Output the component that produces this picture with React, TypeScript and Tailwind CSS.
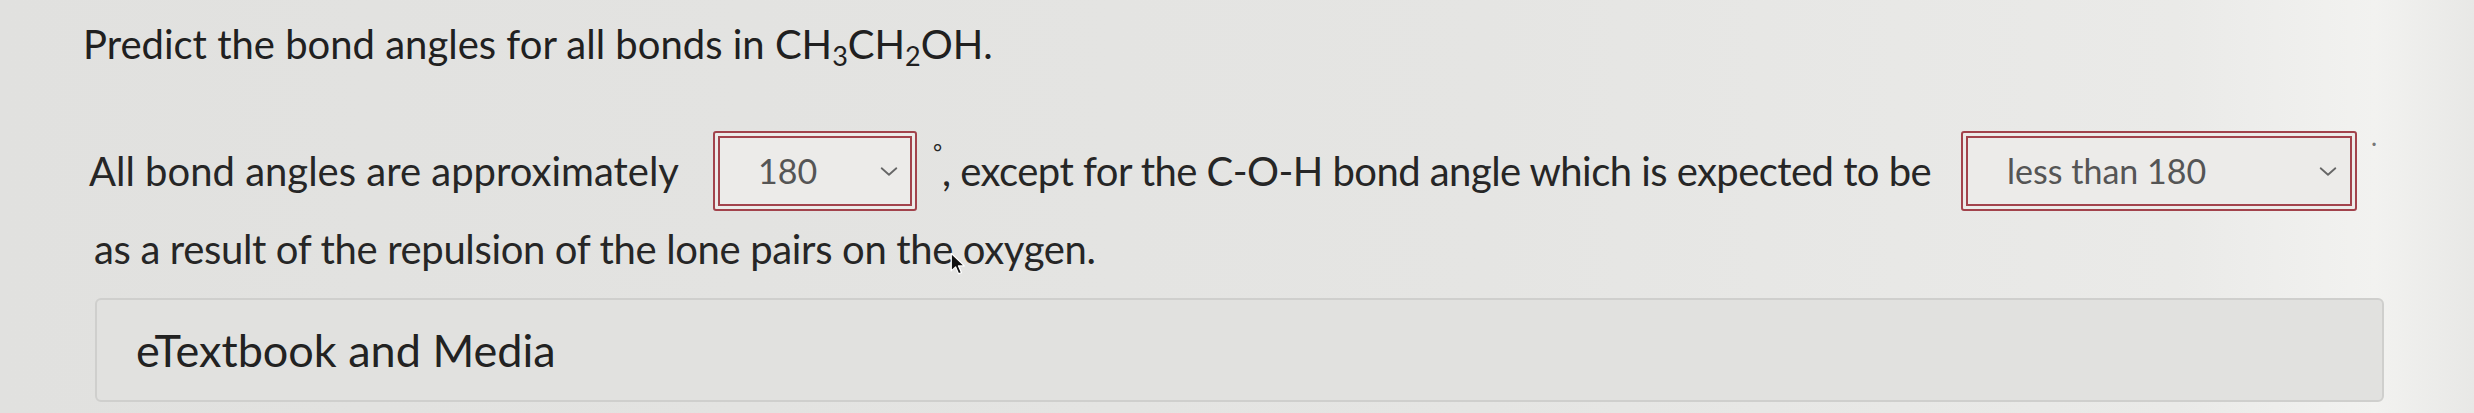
import React from "react";

type SelectProps = {
  value: string;
  className: string;
};

function Chevron() {
  return (
    <svg viewBox="0 0 20 12" className="h-[11px] w-[20px] text-[#666666]" fill="none" stroke="currentColor" strokeWidth={2} strokeLinecap="round" strokeLinejoin="round">
      <path d="M2 2.5l8 7 8-7" />
    </svg>
  );
}

function AnswerSelect({ value, className }: SelectProps) {
  return (
    <div
      className={`inline-flex h-[80px] shrink-0 items-center justify-between rounded-[3px] border-[7px] border-double border-[#a2434c] bg-[#ecebe9] ${className}`}
    >
      <span className="text-[34px] leading-none text-[#555555]">{value}</span>
      <Chevron />
    </div>
  );
}

function Cursor() {
  return (
    <svg viewBox="0 0 12 19" className="absolute left-[950px] top-[252px] h-[24px] w-[15px]">
      <path d="M1 1v14l3.5-3.2 2.4 5.6 2.3-1-2.4-5.4H11.5z" fill="#111" stroke="#fff" strokeWidth={1} strokeLinejoin="round" />
    </svg>
  );
}

export default function App() {
  return (
    <div
      className="relative h-[413px] w-[2474px] overflow-hidden bg-[linear-gradient(90deg,#e1e1df_0%,#e5e5e3_60%,#eaeae8_88%,#f2f2f0_96%,#e8e8e6_100%)] font-['Lato','Noto_Sans',sans-serif] text-[#262626]"
    >
      <p className="pl-[83px] pt-[20px] text-[40px] leading-[1.2] text-[#202020]">
        Predict the bond angles for all bonds in CH
        <sub className="text-[27px]">3</sub>CH<sub className="text-[27px]">2</sub>OH.
      </p>

      <div className="mt-[63px] flex h-[80px] items-center pl-[89px] text-[40px] leading-[1.2]">
        <span>All bond angles are approximately</span>
        <AnswerSelect value="180" className="ml-[34px] w-[204px] pl-[38px] pr-[11px]" />
        <span className="mb-[38px] ml-[16px] text-[22px] leading-none">°</span>
        <span className="tracking-[-0.55px]">, except for the C-O-H bond angle which is expected to be</span>
        <AnswerSelect value="less than 180" className="ml-[30px] w-[396px] pl-[39px] pr-[12px]" />
        <span className="-mt-[8px] ml-[14px] self-start text-[26px] leading-none text-[#777]">.</span>
      </div>

      <p className="mt-[14px] pl-[94px] text-[40px] leading-[1.2] tracking-[-0.35px]">
        as a result of the repulsion of the lone pairs on the oxygen.
      </p>

      <div className="ml-[95px] mr-[90px] mt-[25px] flex h-[104px] items-center rounded-[6px] border-2 border-[#cfcfcd] bg-[#e1e1df] pl-[39px]">
        <span className="text-[45px] leading-none text-[#222222]">eTextbook and Media</span>
      </div>

      <Cursor />
    </div>
  );
}
